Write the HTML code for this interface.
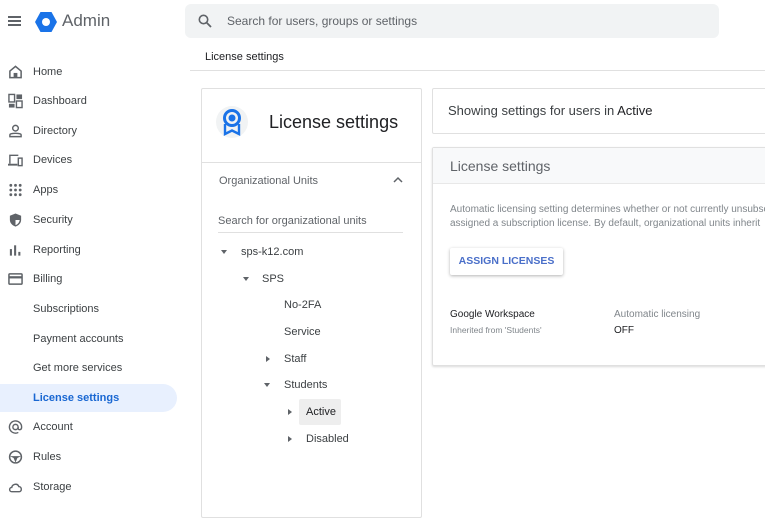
<!DOCTYPE html>
<html><head><meta charset="utf-8"><style>
*{box-sizing:border-box;margin:0;padding:0}
body{width:765px;height:505px;overflow:hidden;background:#fff;font-family:"Liberation Sans",sans-serif;color:#202124;position:relative}
.a{position:absolute;white-space:nowrap}
.nav{font-size:11px;color:#3c4043;left:33px;transform:translateY(-50%)}
.ic{position:absolute;left:8px;width:15px;height:15px;transform:translateY(-50%)}
.t{font-size:11px;color:#3c4043;transform:translateY(-50%)}
.tri{position:absolute;width:0;height:0}
.dn{border-left:3.5px solid transparent;border-right:3.5px solid transparent;border-top:4px solid #5f6368;transform:translateY(-50%)}
.rt{border-top:3.5px solid transparent;border-bottom:3.5px solid transparent;border-left:4px solid #5f6368;transform:translateY(-50%)}
</style></head><body>
<div class="a" style="left:8px;top:16px;width:13px;height:2px;background:#5f6368;box-shadow:0 4px 0 #5f6368,0 8px 0 #5f6368"></div>
<svg class="a" style="left:35px;top:12px" width="22" height="20" viewBox="0 0 22 20"><polygon points="5.5,0 16.5,0 22,10 16.5,20 5.5,20 0,10" fill="#1a73e8"/><circle cx="11" cy="10" r="4" fill="#fff"/></svg>
<div class="a" style="left:62px;top:11px;font-size:17px;color:#5f6368">Admin</div>
<div class="a" style="left:185px;top:4px;width:534px;height:34px;background:#f1f3f4;border-radius:6px"></div>
<svg class="a" style="left:198px;top:14px" width="14" height="14" viewBox="0 0 14 14"><circle cx="5.5" cy="5.5" r="4.2" fill="none" stroke="#5f6368" stroke-width="1.6"/><line x1="8.5" y1="8.5" x2="13" y2="13" stroke="#5f6368" stroke-width="1.8"/></svg>
<div class="a" style="left:227px;top:14px;font-size:12px;color:#5f6368">Search for users, groups or settings</div>
<div class="a" style="left:205px;top:51px;font-size:11px;color:#202124">License settings</div>
<div class="a" style="left:190px;top:70px;width:575px;height:1px;background:#e0e0e0"></div>
<div class="a" style="left:0;top:384px;width:177px;height:28px;background:#e8f0fe;border-radius:0 14px 14px 0"></div>
<svg class="ic" style="top:72px" viewBox="0 0 16 16"><path d="M2 7 L8 2 L14 7 V14 H2Z" fill="none" stroke="#5f6368" stroke-width="1.6"/><rect x="6" y="9" width="4" height="5" fill="#5f6368"/></svg>
<div class="a nav" style="top:72px">Home</div>
<svg class="ic" style="top:101px" viewBox="0 0 16 16"><rect x="1" y="1" width="6" height="8" fill="none" stroke="#5f6368" stroke-width="1.5"/><rect x="9" y="1" width="6" height="5" fill="#5f6368"/><rect x="1" y="11" width="6" height="4" fill="#5f6368"/><rect x="9" y="8" width="6" height="7" fill="none" stroke="#5f6368" stroke-width="1.5"/></svg>
<div class="a nav" style="top:101px">Dashboard</div>
<svg class="ic" style="top:131px" viewBox="0 0 16 16"><circle cx="8" cy="5" r="3" fill="none" stroke="#5f6368" stroke-width="1.5"/><path d="M2 14 V12 C2 10 14 10 14 12 V14Z" fill="none" stroke="#5f6368" stroke-width="1.5"/></svg>
<div class="a nav" style="top:131px">Directory</div>
<svg class="ic" style="top:160px" viewBox="0 0 16 16"><path d="M2 12 V3 H11" fill="none" stroke="#5f6368" stroke-width="1.5"/><rect x="0" y="12" width="10" height="2" fill="#5f6368"/><rect x="11" y="6" width="4" height="8" fill="none" stroke="#5f6368" stroke-width="1.5"/></svg>
<div class="a nav" style="top:160px">Devices</div>
<svg class="ic" style="top:190px" viewBox="0 0 16 16" fill="#5f6368"><circle cx="3" cy="3" r="1.5"/><circle cx="8" cy="3" r="1.5"/><circle cx="13" cy="3" r="1.5"/><circle cx="3" cy="8" r="1.5"/><circle cx="8" cy="8" r="1.5"/><circle cx="13" cy="8" r="1.5"/><circle cx="3" cy="13" r="1.5"/><circle cx="8" cy="13" r="1.5"/><circle cx="13" cy="13" r="1.5"/></svg>
<div class="a nav" style="top:190px">Apps</div>
<svg class="ic" style="top:220px" viewBox="0 0 16 16"><path d="M8 1 L14 3.5 V8 C14 11.5 11 14 8 15 C5 14 2 11.5 2 8 V3.5Z" fill="#5f6368"/><path d="M8 3 V8 H12.5 C12 11 10 12.8 8 13.5Z" fill="#fff"/></svg>
<div class="a nav" style="top:220px">Security</div>
<svg class="ic" style="top:250px" viewBox="0 0 16 16" fill="#5f6368"><rect x="2" y="7" width="2.2" height="7"/><rect x="6.5" y="3" width="2.2" height="11"/><rect x="11" y="10" width="2.2" height="4"/></svg>
<div class="a nav" style="top:250px">Reporting</div>
<svg class="ic" style="top:279px" viewBox="0 0 16 16"><rect x="1" y="2.5" width="14" height="11" rx="1" fill="none" stroke="#5f6368" stroke-width="1.6"/><rect x="1" y="5" width="14" height="2.4" fill="#5f6368"/></svg>
<div class="a nav" style="top:279px">Billing</div>
<div class="a nav" style="top:309px">Subscriptions</div>
<div class="a nav" style="top:339px">Payment accounts</div>
<div class="a nav" style="top:368px">Get more services</div>
<div class="a nav" style="top:398px;color:#1967d2;font-weight:bold">License settings</div>
<svg class="ic" style="top:427px" viewBox="0 0 16 16"><circle cx="8" cy="8" r="2.8" fill="none" stroke="#5f6368" stroke-width="1.5"/><path d="M10.8 8 V9.5 C10.8 11.5 14.5 11.5 14.5 8.5 A6.5 6.5 0 1 0 11 13.8" fill="none" stroke="#5f6368" stroke-width="1.5"/></svg>
<div class="a nav" style="top:427px">Account</div>
<svg class="ic" style="top:457px" viewBox="0 0 16 16"><circle cx="8" cy="8" r="6.3" fill="none" stroke="#5f6368" stroke-width="1.6"/><path d="M2 7 H14 L10 9 L8 14 L6 9Z" fill="#5f6368"/></svg>
<div class="a nav" style="top:457px">Rules</div>
<svg class="ic" style="top:487px" viewBox="0 0 16 16"><path d="M4 13 C1 13 1 8.5 4 8.5 C4.5 5 10 3.5 11.5 7.5 C15 7.5 15 13 12 13Z" fill="none" stroke="#5f6368" stroke-width="1.5"/></svg>
<div class="a nav" style="top:487px">Storage</div>
<div class="a" style="left:201px;top:88px;width:221px;height:430px;border:1px solid #e0e0e0;border-radius:2px"></div>
<div class="a" style="left:201px;top:162px;width:221px;height:1px;background:#e0e0e0"></div>
<svg class="a" style="left:216px;top:106px" width="32" height="33" viewBox="0 0 32 33"><circle cx="16" cy="16" r="16" fill="#f1f3f4"/><circle cx="16" cy="12" r="7.5" fill="none" stroke="#1a73e8" stroke-width="3"/><circle cx="16" cy="12" r="3.5" fill="#1a73e8"/><path d="M9 18 V28 L16 24.5 L23 28 V18" fill="none" stroke="#1a73e8" stroke-width="2.4"/></svg>
<div class="a" style="left:269px;top:112px;font-size:18px;color:#202124">License settings</div>
<div class="a" style="left:219px;top:175px;font-size:11px;color:#5f6368">Organizational Units</div>
<svg class="a" style="left:393px;top:176px" width="10" height="7" viewBox="0 0 10 7"><path d="M1 6 L5 2 L9 6" fill="none" stroke="#5f6368" stroke-width="1.5"/></svg>
<div class="a" style="left:218px;top:215px;font-size:11px;color:#5f6368">Search for organizational units</div>
<div class="a" style="left:218px;top:232px;width:185px;height:1px;background:#e0e0e0"></div>
<div class="tri dn" style="left:221px;top:252px"></div><div class="a t" style="left:241px;top:252px">sps-k12.com</div>
<div class="tri dn" style="left:243px;top:279px"></div><div class="a t" style="left:262px;top:279px">SPS</div>
<div class="a t" style="left:284px;top:305px">No-2FA</div>
<div class="a t" style="left:284px;top:332px">Service</div>
<div class="tri rt" style="left:266px;top:359px"></div><div class="a t" style="left:284px;top:359px">Staff</div>
<div class="tri dn" style="left:264px;top:385px"></div><div class="a t" style="left:284px;top:385px">Students</div>
<div class="a" style="left:299px;top:399px;width:42px;height:26px;background:#eeeeee;border-radius:2px"></div>
<div class="tri rt" style="left:288px;top:412px"></div><div class="a t" style="left:306px;top:412px;color:#202124">Active</div>
<div class="tri rt" style="left:288px;top:439px"></div><div class="a t" style="left:306px;top:439px">Disabled</div>
<div class="a" style="left:432px;top:88px;width:345px;height:46px;border:1px solid #e0e0e0;border-radius:2px"></div>
<div class="a" style="left:448px;top:103px;font-size:13px;color:#3c4043">Showing settings for users in <span style="color:#202124">Active</span></div>
<div class="a" style="left:432px;top:147px;width:345px;height:219px;border:1px solid #e0e0e0;border-radius:2px;box-shadow:0 1px 2px rgba(0,0,0,.15)"></div>
<div class="a" style="left:433px;top:148px;width:340px;height:36px;background:#f8f9fa;border-bottom:1px solid #e8e8e8"></div>
<div class="a" style="left:450px;top:158px;font-size:14px;color:#5f6368">License settings</div>
<div class="a" style="left:450px;top:203px;font-size:10px;color:#80868b;line-height:14px">Automatic licensing setting determines whether or not currently unsubscribed<br>assigned a subscription license. By default, organizational units inherit</div>
<div class="a" style="left:450px;top:248px;width:113px;height:27px;background:#fff;border-radius:2px;box-shadow:0 1px 3px rgba(0,0,0,.3);font-size:10.5px;font-weight:bold;color:#4a6fc9;text-align:center;line-height:27px">ASSIGN LICENSES</div>
<div class="a" style="left:450px;top:309px;font-size:10px;color:#202124">Google Workspace</div>
<div class="a" style="left:450px;top:325px;font-size:8.5px;color:#80868b">Inherited from 'Students'</div>
<div class="a" style="left:614px;top:309px;font-size:10px;color:#80868b">Automatic licensing</div>
<div class="a" style="left:614px;top:325px;font-size:10px;color:#202124">OFF</div>
</body></html>
